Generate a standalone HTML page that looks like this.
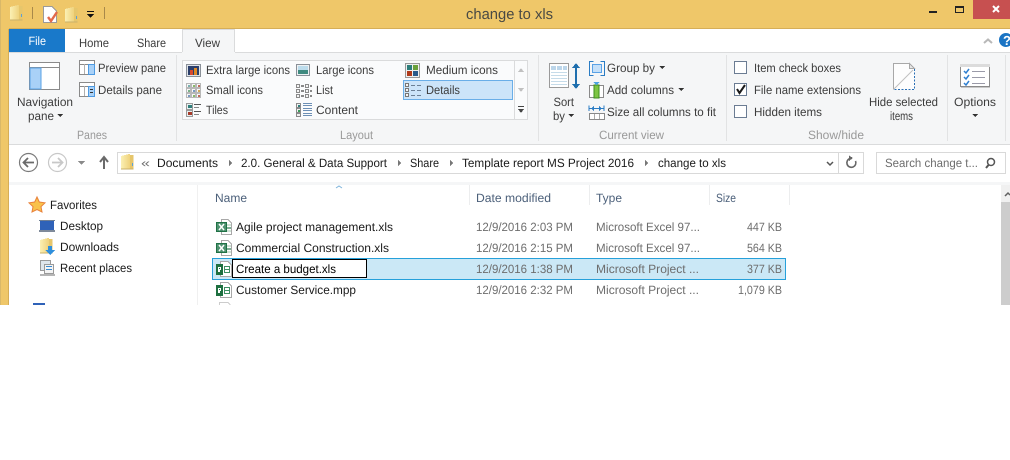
<!DOCTYPE html>
<html>
<head>
<meta charset="utf-8">
<style>
html,body{margin:0;padding:0;background:#fff;width:1010px;height:460px;overflow:hidden}
svg{display:block}
text{font-family:"Liberation Sans",sans-serif;font-size:12px;fill:#3c3c3c;text-rendering:geometricPrecision}
.g{fill:#999}
.m{fill:#6d6d6d}
.h{fill:#4c607a}
.k{fill:#1a1a1a}
</style>
</head>
<body>
<svg width="1010" height="460" viewBox="0 0 1010 460" xmlns="http://www.w3.org/2000/svg" shape-rendering="crispEdges">
<defs>
<linearGradient id="fold" x1="0" y1="0" x2="1" y2="0"><stop offset="0" stop-color="#fbf0b4"/><stop offset="1" stop-color="#efd27c"/></linearGradient>
<g id="xl">
<path d="M5.500 .5H12L15.500 4V15.500H5.500Z" fill="#fff" stroke="#a8a8a8"/>
<rect x="11" y="5" width="4" height="2" fill="#cfe3d6"/><rect x="11" y="8" width="4" height="2" fill="#7fb096"/><rect x="11" y="11" width="4" height="2" fill="#cfe3d6"/>
<rect x="0" y="3" width="11" height="10" fill="#1f7145"/>
<rect x="1" y="4" width="9" height="8" fill="#4e9270"/>
<path d="M3 5L8 11M8 5L3 11" stroke="#fff" stroke-width="1.500" fill="none" shape-rendering="auto"/>
</g>
<g id="pj">
<path d="M4.500 .5H12L15.500 4V15.500H4.500Z" fill="#fff" stroke="#a8a8a8"/>
<rect x="8" y="5" width="6" height="1" fill="#3f8f63"/><rect x="8" y="8" width="6" height="1" fill="#3f8f63"/><rect x="8" y="11" width="6" height="1" fill="#3f8f63"/>
<rect x="8" y="5" width="1" height="7" fill="#3f8f63"/><rect x="13" y="5" width="1" height="7" fill="#3f8f63"/>
<rect x="0" y="3" width="7" height="11" fill="#1e7040"/>
<rect x="2" y="6" width="3" height="5" fill="#fff"/><rect x="3" y="7" width="1" height="1" fill="#1e7040"/><rect x="4" y="9" width="1" height="2" fill="#1e7040"/>
</g>
<g id="folder">
<path d="M0 2L8 0H9V15L0 15Z" fill="url(#fold)"/>
<path d="M9 1H12.500V15H9Z" fill="#e6c66c"/>
<path d="M0 15H12.500" stroke="#c9b06a" fill="none"/>
<rect x="11" y="9" width="1" height="3" fill="#5ba0d8"/>
</g>
</defs>

<rect width="1010" height="305" fill="#fff"/>
<!-- frame -->
<rect width="1010" height="28" fill="#efc769"/>
<rect y="28" width="1010" height="1" fill="#d6ae57"/>
<rect y="28" width="9" height="277" fill="#efc769"/>
<rect x="8" y="29" width="1" height="276" fill="#d6ae57"/>
<rect x="0" y="0" width="1" height="305" fill="#d9b869"/>

<!-- quick access -->
<use href="#folder" x="10" y="5"/>
<rect x="32" y="7" width="1" height="12" fill="#a8894a"/>
<path d="M43.500 6.500H52L56.500 11V22.500H43.500Z" fill="#fff" stroke="#9a9a9a"/>
<path d="M48 17L51 21L57 12" stroke="#e2694b" stroke-width="2.400" fill="none" shape-rendering="auto"/>
<use href="#folder" x="65" y="7"/>
<rect x="87" y="11" width="7" height="1" fill="#111"/>
<path d="M87 14H94L90.500 18Z" fill="#111"/>
<rect x="104" y="7" width="1" height="12" fill="#a8894a"/>
<text x="466" y="19" textLength="87" lengthAdjust="spacingAndGlyphs" style="font-size:15px;fill:#4a4a44">change to xls</text>

<!-- window controls -->
<rect x="929" y="11" width="8" height="2" fill="#222"/>
<rect x="955.500" y="6.500" width="8" height="6" fill="none" stroke="#222"/><rect x="955" y="6" width="9" height="2" fill="#222"/>
<rect x="973" y="0" width="37" height="19" fill="#c75050"/>
<path d="M993 6L999 12M999 6L993 12" stroke="#fff" stroke-width="2" fill="none" shape-rendering="auto"/>

<!-- tabs -->
<rect x="9" y="29" width="1001" height="23" fill="#fff"/>
<rect x="9" y="29" width="56" height="23" fill="#1979ca"/>
<text x="28.500" y="45" textLength="17.500" lengthAdjust="spacingAndGlyphs" style="fill:#fff">File</text>
<text x="79" y="47" textLength="30" lengthAdjust="spacingAndGlyphs">Home</text>
<text x="137" y="47" textLength="29" lengthAdjust="spacingAndGlyphs">Share</text>
<path d="M984 43L988 39.500L992 43" stroke="#b8b8b8" stroke-width="2" fill="none" shape-rendering="auto"/>
<circle cx="1006" cy="40" r="7" fill="#1a74c4" shape-rendering="auto"/>
<text x="1003" y="45" style="font-size:13px;font-weight:bold;fill:#fff">?</text>

<!-- ribbon -->
<rect x="9" y="52" width="1001" height="92" fill="#f5f6f7"/>
<rect x="9" y="52" width="1001" height="1" fill="#dadbdc"/>
<rect x="9" y="144" width="1001" height="1" fill="#dadbdc"/>
<rect x="182" y="29" width="53" height="24" fill="#f5f6f7"/>
<path d="M182.500 52V29.500H234.500V52" fill="none" stroke="#dadbdc"/>
<text x="195" y="47" textLength="25" lengthAdjust="spacingAndGlyphs">View</text>
<rect x="176" y="55" width="1" height="86" fill="#e2e3e4"/>
<rect x="538" y="55" width="1" height="86" fill="#e2e3e4"/>
<rect x="726" y="55" width="1" height="86" fill="#e2e3e4"/>
<rect x="947" y="55" width="1" height="86" fill="#e2e3e4"/>
<rect x="1005" y="55" width="1" height="86" fill="#e2e3e4"/>

<!-- panes -->
<rect x="29.500" y="62.500" width="30" height="27" fill="#fff" stroke="#8a8a8a"/>
<rect x="29" y="67" width="31" height="1" fill="#8a8a8a"/>
<rect x="30" y="68" width="11" height="21" fill="#a9d1f7" stroke="#5aa2e6"/>
<rect x="79.500" y="60.500" width="15" height="14" fill="#fff" stroke="#8a8a8a"/>
<rect x="79" y="64" width="16" height="1" fill="#8a8a8a"/>
<rect x="84" y="64" width="1" height="10" fill="#b0b0b0"/>
<rect x="88.500" y="64.500" width="6" height="10" fill="#a9d1f7" stroke="#4d9ae2"/>
<rect x="79.500" y="82.500" width="15" height="14" fill="#fff" stroke="#8a8a8a"/>
<rect x="79" y="86" width="16" height="1" fill="#8a8a8a"/>
<rect x="84" y="86" width="1" height="10" fill="#b0b0b0"/>
<rect x="88.500" y="86.500" width="6" height="10" fill="#a9d1f7" stroke="#4d9ae2"/>
<rect x="90" y="89" width="3" height="1" fill="#333"/><rect x="90" y="92" width="3" height="1" fill="#333"/>
<text x="98" y="72" textLength="68" lengthAdjust="spacingAndGlyphs">Preview pane</text>
<text x="98" y="94" textLength="64" lengthAdjust="spacingAndGlyphs">Details pane</text>
<text x="17" y="106" textLength="56" lengthAdjust="spacingAndGlyphs">Navigation</text>
<text x="28" y="120" textLength="26" lengthAdjust="spacingAndGlyphs">pane</text>
<path d="M57 114H63L60 117Z" fill="#333"/>
<text x="77" y="139" textLength="30" lengthAdjust="spacingAndGlyphs" class="g">Panes</text>

<!-- layout gallery -->
<rect x="182.500" y="60.500" width="345" height="59" fill="#fafbfc" stroke="#dadbdc"/>
<rect x="514" y="61" width="1" height="58" fill="#dadbdc"/>
<rect x="404" y="80" width="109" height="20" fill="#cce4f9"/>
<rect x="403.500" y="80.500" width="109" height="19" fill="none" stroke="#6aaee8"/>
<path d="M518 72L521 68L524 72Z" fill="#c0c0c0"/>
<path d="M518 88L521 92L524 88Z" fill="#c0c0c0"/>
<rect x="518" y="106" width="6" height="1" fill="#444"/><path d="M518 109H524L521 113Z" fill="#444"/>

<rect x="186.500" y="64.500" width="14" height="12" fill="#dfe3e8" stroke="#8a9098"/>
<rect x="188" y="66" width="11" height="9" fill="#2b3f6b"/><rect x="190" y="70" width="3" height="5" fill="#d94a2e"/><rect x="194" y="68" width="3" height="7" fill="#e08a26"/>
<g fill="#f8f8f8" stroke="#b8b8b8">
<rect x="186.500" y="83.500" width="4" height="4"/><rect x="191.500" y="83.500" width="4" height="4"/><rect x="196.500" y="83.500" width="4" height="4"/>
<rect x="186.500" y="88.500" width="4" height="4"/><rect x="191.500" y="88.500" width="4" height="4"/><rect x="196.500" y="88.500" width="4" height="4"/>
<rect x="186.500" y="93.500" width="4" height="4"/><rect x="191.500" y="93.500" width="4" height="4"/><rect x="196.500" y="93.500" width="4" height="4"/>
</g>
<rect x="188" y="85" width="2" height="2" fill="#7ab0b0"/><rect x="193" y="85" width="2" height="2" fill="#8aba6a"/><rect x="198" y="85" width="2" height="2" fill="#c06a5a"/>
<rect x="188" y="90" width="2" height="2" fill="#7ab08a"/><rect x="193" y="90" width="2" height="2" fill="#7a9ac0"/><rect x="198" y="90" width="2" height="2" fill="#d0a85a"/>
<rect x="188" y="95" width="2" height="2" fill="#7a9ac0"/><rect x="193" y="95" width="2" height="2" fill="#8aba6a"/><rect x="198" y="95" width="2" height="2" fill="#c06a5a"/>
<rect x="186.500" y="103.500" width="6" height="6" fill="#e8f0f0" stroke="#9a9a9a"/><rect x="188" y="105" width="4" height="3" fill="#2d7d7a"/>
<rect x="186.500" y="110.500" width="6" height="6" fill="#e8f0f0" stroke="#9a9a9a"/><rect x="188" y="112" width="4" height="3" fill="#a83a2a"/>
<rect x="194" y="104" width="7" height="1" fill="#555"/><rect x="194" y="107" width="5" height="1" fill="#888"/><rect x="194" y="111" width="7" height="1" fill="#555"/><rect x="194" y="114" width="5" height="1" fill="#888"/>
<text x="206" y="74" textLength="84" lengthAdjust="spacingAndGlyphs">Extra large icons</text>
<text x="206" y="94" textLength="57" lengthAdjust="spacingAndGlyphs">Small icons</text>
<text x="206" y="114" textLength="22" lengthAdjust="spacingAndGlyphs">Tiles</text>

<rect x="296.500" y="64.500" width="13" height="11" fill="#eef1f3" stroke="#8a9098"/>
<rect x="298" y="66" width="10" height="4" fill="#bcdcec"/><rect x="298" y="70" width="10" height="4" fill="#3f8a80"/>
<g fill="#f4f4f4" stroke="#8a8a8a">
<rect x="296.500" y="84.500" width="3" height="3"/><rect x="296.500" y="89.500" width="3" height="3"/><rect x="296.500" y="94.500" width="3" height="3"/>
<rect x="305.500" y="84.500" width="3" height="3"/><rect x="305.500" y="89.500" width="3" height="3"/><rect x="305.500" y="94.500" width="3" height="3"/>
</g>
<g fill="#888"><rect x="301" y="85" width="3" height="2"/><rect x="301" y="90" width="3" height="2"/><rect x="301" y="95" width="3" height="2"/><rect x="310" y="85" width="2" height="2"/><rect x="310" y="90" width="2" height="2"/><rect x="310" y="95" width="2" height="2"/></g>
<g fill="#f2f2f2" stroke="#8a8a8a">
<rect x="296.500" y="103.500" width="4" height="4"/><rect x="296.500" y="108.500" width="4" height="4"/><rect x="296.500" y="113.500" width="4" height="3"/>
</g>
<rect x="298" y="105" width="2" height="2" fill="#2d7d7a"/><rect x="298" y="110" width="2" height="2" fill="#3a9a5a"/>
<g fill="#6d8fb5"><rect x="303" y="103" width="9" height="1"/><rect x="303" y="105" width="9" height="1"/><rect x="303" y="108" width="9" height="1"/><rect x="303" y="110" width="9" height="1"/><rect x="303" y="113" width="9" height="1"/><rect x="303" y="115" width="9" height="1"/></g>
<text x="316" y="74" textLength="58" lengthAdjust="spacingAndGlyphs">Large icons</text>
<text x="316" y="94" textLength="17" lengthAdjust="spacingAndGlyphs">List</text>
<text x="316" y="114" textLength="42" lengthAdjust="spacingAndGlyphs">Content</text>

<rect x="405.500" y="63.500" width="14" height="14" fill="#f0f0f0" stroke="#9a9a9a"/>
<rect x="407" y="65" width="5" height="5" fill="#2d7d7a"/><rect x="413" y="65" width="5" height="5" fill="#6aa03a"/><rect x="407" y="71" width="5" height="5" fill="#b03a1a"/><rect x="413" y="71" width="5" height="5" fill="#2a5a8a"/>
<g fill="#f4f4f4" stroke="#777"><rect x="405.500" y="83.500" width="3" height="3"/><rect x="405.500" y="88.500" width="3" height="3"/><rect x="405.500" y="93.500" width="3" height="3"/></g>
<g fill="#6b7f95"><rect x="411" y="85" width="4" height="1"/><rect x="417" y="85" width="4" height="1"/><rect x="411" y="90" width="4" height="1"/><rect x="417" y="90" width="4" height="1"/><rect x="411" y="95" width="4" height="1"/><rect x="417" y="95" width="4" height="1"/></g>
<text x="426" y="74" textLength="72" lengthAdjust="spacingAndGlyphs">Medium icons</text>
<text x="426" y="94" textLength="34" lengthAdjust="spacingAndGlyphs">Details</text>
<text x="340" y="139" textLength="33" lengthAdjust="spacingAndGlyphs" class="g">Layout</text>

<!-- current view -->
<rect x="549.500" y="63.500" width="19" height="24" fill="#fff" stroke="#9a9a9a"/>
<g fill="#bcd6ea"><rect x="551" y="66" width="5" height="4"/><rect x="557" y="66" width="5" height="4"/><rect x="563" y="66" width="4" height="4"/></g>
<g fill="#c5dbe9"><rect x="551" y="72" width="16" height="1"/><rect x="551" y="75" width="16" height="1"/><rect x="551" y="78" width="16" height="1"/><rect x="551" y="81" width="16" height="1"/><rect x="551" y="84" width="16" height="1"/></g>
<rect x="575" y="66" width="2" height="20" fill="#1f6fae"/>
<path d="M572 68L576 63L580 68Z" fill="#1f6fae"/><path d="M572 84L576 89L580 84Z" fill="#1f6fae"/>
<text x="553.500" y="106" textLength="20.500" lengthAdjust="spacingAndGlyphs">Sort</text>
<text x="553" y="120" textLength="12" lengthAdjust="spacingAndGlyphs">by</text>
<path d="M568 114H574L571 117Z" fill="#333"/>

<path d="M593.500 61.500H589.500V75.500H593.500M600.500 61.500H604.500V75.500H600.500" fill="none" stroke="#2a7cc4"/>
<rect x="592.500" y="64.500" width="9" height="8" fill="#c5e0f9" stroke="#5aa2e6"/>
<rect x="589.500" y="85.500" width="14" height="12" fill="#fff" stroke="#8a8a8a"/>
<rect x="594" y="85" width="5" height="13" fill="#7ec544" stroke="#3d8e1e"/>
<path d="M593 82H600L596.500 85Z" fill="#4da3e0"/>
<rect x="589" y="108" width="15" height="1" fill="#2a7cc4"/>
<path d="M589 105.500V111M604 105.500V111" stroke="#2a7cc4" fill="none"/>
<path d="M591 108.500L594 106V111ZM602 108.500L599 106V111Z" fill="#2a7cc4"/>
<rect x="589.500" y="113.500" width="15" height="6" fill="#fff" stroke="#8a8a8a"/><rect x="594" y="114" width="1" height="5" fill="#aaa"/><rect x="599" y="114" width="1" height="5" fill="#aaa"/>
<text x="607" y="72" textLength="48" lengthAdjust="spacingAndGlyphs">Group by</text>
<path d="M659 66H665L662 69Z" fill="#333"/>
<text x="607" y="94" textLength="67" lengthAdjust="spacingAndGlyphs">Add columns</text>
<path d="M678 88H684L681 91Z" fill="#333"/>
<text x="607" y="116" textLength="109" lengthAdjust="spacingAndGlyphs">Size all columns to fit</text>
<text x="599" y="139" textLength="65" lengthAdjust="spacingAndGlyphs" class="g">Current view</text>

<!-- show/hide -->
<rect x="734.500" y="61.500" width="12" height="12" fill="#fff" stroke="#6b7c93"/>
<rect x="734.500" y="83.500" width="12" height="12" fill="#fff" stroke="#6b7c93"/>
<path d="M737 89L739.500 93L745 85" stroke="#1a1a1a" stroke-width="2" fill="none" shape-rendering="auto"/>
<rect x="734.500" y="105.500" width="12" height="12" fill="#fff" stroke="#6b7c93"/>
<text x="754" y="72" textLength="87" lengthAdjust="spacingAndGlyphs">Item check boxes</text>
<text x="754" y="94" textLength="107" lengthAdjust="spacingAndGlyphs">File name extensions</text>
<text x="754" y="116" textLength="68" lengthAdjust="spacingAndGlyphs">Hidden items</text>
<path d="M893.500 89.500V63.500H909L914.500 69V89.500Z" fill="#fdfdfd"/>
<path d="M914.500 69V89.500H893.500" stroke="#2a6fb5" stroke-dasharray="2 1.500" fill="none"/>
<path d="M893.500 89.500V63.500H909" fill="none" stroke="#a8a8a8"/>
<path d="M909.500 63.500V68.500H914.500Z" fill="#e8e8e8" stroke="#a8a8a8"/>
<path d="M894 89L913 70" stroke="#c0c0c0" fill="none" shape-rendering="auto"/>
<text x="869" y="106" textLength="69" lengthAdjust="spacingAndGlyphs">Hide selected</text>
<text x="890" y="120" textLength="23" lengthAdjust="spacingAndGlyphs">items</text>
<text x="808" y="139" textLength="56" lengthAdjust="spacingAndGlyphs" class="g">Show/hide</text>

<!-- options -->
<rect x="960.500" y="64.500" width="29" height="22" fill="#fff" stroke="#8a8a8a"/>
<rect x="960" y="64" width="30" height="3" fill="#dcdcdc"/>
<rect x="961" y="87" width="29" height="1" fill="#c8c8c8"/>
<path d="M964 71L966 73L969 69M964 77L966 79L969 75M964 83L966 85L969 81" stroke="#2f7fd0" stroke-width="1.500" fill="none" shape-rendering="auto"/>
<g fill="#9a9aa8"><rect x="972" y="71" width="13" height="1"/><rect x="972" y="77" width="13" height="1"/><rect x="972" y="83" width="13" height="1"/></g>
<text x="954" y="106" textLength="42" lengthAdjust="spacingAndGlyphs">Options</text>
<path d="M972 114H978L975 117Z" fill="#333"/>

<!-- nav bar -->
<circle cx="28.500" cy="162.500" r="9" fill="#fff" stroke="#7a7a7a" stroke-width="1.200" shape-rendering="auto"/>
<path d="M34 162.500H24M28 158L23.500 162.500L28 167" stroke="#6a6a6a" stroke-width="1.800" fill="none" shape-rendering="auto"/>
<circle cx="57.500" cy="162.500" r="9" fill="#fff" stroke="#c8c8c8" stroke-width="1.200" shape-rendering="auto"/>
<path d="M52 162.500H62M58 158L62.500 162.500L58 167" stroke="#c8c8c8" stroke-width="1.800" fill="none" shape-rendering="auto"/>
<path d="M78 161H85L81.500 165Z" fill="#8a8a8a"/>
<path d="M104 169V158M100 162L104 157L108 162" stroke="#6a6a6a" stroke-width="2" fill="none" shape-rendering="auto"/>
<rect x="117.500" y="152.500" width="746" height="21" fill="#fff" stroke="#d9d9d9"/>
<rect x="838" y="153" width="1" height="20" fill="#d9d9d9"/>
<use href="#folder" x="121" y="154"/>
<text x="141" y="167" textLength="9" lengthAdjust="spacingAndGlyphs" class="m">«</text>
<text x="157" y="167" textLength="61" lengthAdjust="spacingAndGlyphs" class="k">Documents</text>
<path d="M229 160L232 163L229 166Z" fill="#777"/>
<text x="241" y="167" textLength="146" lengthAdjust="spacingAndGlyphs" class="k">2.0. General &amp; Data Support</text>
<path d="M398 160L401 163L398 166Z" fill="#777"/>
<text x="410" y="167" textLength="29" lengthAdjust="spacingAndGlyphs" class="k">Share</text>
<path d="M450 160L453 163L450 166Z" fill="#777"/>
<text x="462" y="167" textLength="172" lengthAdjust="spacingAndGlyphs" class="k">Template report MS Project 2016</text>
<path d="M645 160L648 163L645 166Z" fill="#777"/>
<text x="658" y="167" textLength="68" lengthAdjust="spacingAndGlyphs" class="k">change to xls</text>
<path d="M827 162L830 165L833 162" stroke="#555" stroke-width="1.500" fill="none" shape-rendering="auto"/>
<path d="M855.500 161A4.500 4.500 0 1 1 850 158.500" stroke="#666" stroke-width="1.600" fill="none" shape-rendering="auto"/>
<path d="M849 155.500V161L853 158Z" fill="#666"/>
<rect x="876.500" y="152.500" width="129" height="21" fill="#fff" stroke="#d9d9d9"/>
<text x="885" y="167" textLength="93" lengthAdjust="spacingAndGlyphs" class="m">Search change t...</text>
<circle cx="991" cy="162" r="3.500" fill="none" stroke="#555" stroke-width="1.500" shape-rendering="auto"/>
<path d="M988.500 165L986 168" stroke="#555" stroke-width="2" fill="none" shape-rendering="auto"/>

<!-- content -->
<rect x="9" y="182" width="1001" height="3" fill="#f5f6f7"/>
<rect x="197" y="185" width="1" height="120" fill="#f0f0f0"/>

<!-- nav pane -->
<path d="M37 197L39.300 202L45 202.800L41 206.700L42 212L37 209.500L32 212L33 206.700L29 202.800L34.700 202Z" fill="#f9c24a" stroke="#e8813a" stroke-width="1" shape-rendering="auto"/>
<text x="50" y="209" textLength="47" lengthAdjust="spacingAndGlyphs" class="k">Favorites</text>
<rect x="40" y="221" width="14" height="9" fill="#2f62b8"/>
<rect x="39" y="220" width="16" height="1" fill="#6f7f95"/><rect x="39" y="230" width="16" height="2" fill="#7f8a9a"/>
<text x="60" y="230" textLength="43" lengthAdjust="spacingAndGlyphs" class="k">Desktop</text>
<use href="#folder" x="40" y="238"/>
<path d="M48 246H52V250H55L50 255L45 250H48Z" fill="#2f8fdc"/>
<text x="60" y="251" textLength="59" lengthAdjust="spacingAndGlyphs" class="k">Downloads</text>
<rect x="40.500" y="260.500" width="10" height="10" fill="#dfe6ec" stroke="#9a9a9a"/>
<rect x="44.500" y="264.500" width="9" height="9" fill="#f4f4f4" stroke="#9a9a9a"/>
<rect x="46" y="266" width="6" height="1" fill="#3a8ad0"/><rect x="46" y="269" width="6" height="1" fill="#3a8ad0"/>
<rect x="40" y="274" width="15" height="2" fill="#b5b5b5"/>
<text x="60" y="272" textLength="72" lengthAdjust="spacingAndGlyphs" class="k">Recent places</text>
<rect x="33" y="303" width="12" height="2" fill="#2f62b8"/>

<!-- headers -->
<path d="M336 188L339 186L342 188" stroke="#7fb4dc" fill="none" shape-rendering="auto"/>
<rect x="469" y="185" width="1" height="20" fill="#ecedee"/>
<rect x="589" y="185" width="1" height="20" fill="#ecedee"/>
<rect x="709" y="185" width="1" height="20" fill="#ecedee"/>
<rect x="789" y="185" width="1" height="20" fill="#ecedee"/>
<text x="215" y="202" textLength="32" lengthAdjust="spacingAndGlyphs" class="h">Name</text>
<text x="476" y="202" textLength="75" lengthAdjust="spacingAndGlyphs" class="h">Date modified</text>
<text x="596" y="202" textLength="26" lengthAdjust="spacingAndGlyphs" class="h">Type</text>
<text x="716" y="202" textLength="20" lengthAdjust="spacingAndGlyphs" class="h">Size</text>

<!-- selected row -->
<rect x="212.500" y="258.500" width="573" height="21" fill="#cbe8f6" stroke="#26a0da"/>

<!-- rows -->
<use href="#xl" x="216" y="219"/>
<use href="#xl" x="216" y="240"/>
<use href="#pj" x="216" y="261"/>
<use href="#pj" x="216" y="282"/>
<path d="M219.500 305V302.500H228L230.500 305" fill="#fff" stroke="#ccc"/>
<rect x="232.500" y="259.500" width="134" height="18" fill="#fff" stroke="#000"/>
<text x="236" y="231" textLength="157" lengthAdjust="spacingAndGlyphs" class="k">Agile project management.xls</text>
<text x="236" y="252" textLength="153" lengthAdjust="spacingAndGlyphs" class="k">Commercial Construction.xls</text>
<text x="236" y="273" textLength="100" lengthAdjust="spacingAndGlyphs" style="fill:#000">Create a budget.xls</text>
<text x="236" y="294" textLength="120" lengthAdjust="spacingAndGlyphs" class="k">Customer Service.mpp</text>

<text x="476" y="231" textLength="97" lengthAdjust="spacingAndGlyphs" class="m">12/9/2016 2:03 PM</text>
<text x="476" y="252" textLength="97" lengthAdjust="spacingAndGlyphs" class="m">12/9/2016 2:15 PM</text>
<text x="476" y="273" textLength="97" lengthAdjust="spacingAndGlyphs" class="m">12/9/2016 1:38 PM</text>
<text x="476" y="294" textLength="97" lengthAdjust="spacingAndGlyphs" class="m">12/9/2016 2:32 PM</text>

<text x="596" y="231" textLength="104" lengthAdjust="spacingAndGlyphs" class="m">Microsoft Excel 97...</text>
<text x="596" y="252" textLength="104" lengthAdjust="spacingAndGlyphs" class="m">Microsoft Excel 97...</text>
<text x="596" y="273" textLength="103" lengthAdjust="spacingAndGlyphs" class="m">Microsoft Project ...</text>
<text x="596" y="294" textLength="103" lengthAdjust="spacingAndGlyphs" class="m">Microsoft Project ...</text>

<text x="747" y="231" textLength="35" lengthAdjust="spacingAndGlyphs" class="m">447 KB</text>
<text x="747" y="252" textLength="35" lengthAdjust="spacingAndGlyphs" class="m">564 KB</text>
<text x="747" y="273" textLength="35" lengthAdjust="spacingAndGlyphs" class="m">377 KB</text>
<text x="738" y="294" textLength="44" lengthAdjust="spacingAndGlyphs" class="m">1,079 KB</text>

<!-- scrollbar -->
<rect x="1001" y="185" width="9" height="120" fill="#f0f0f0"/>
<rect x="1001" y="202" width="9" height="103" fill="#cdcdcd"/>
<path d="M1005 196L1008 193L1010 195" stroke="#606060" stroke-width="1.500" fill="none" shape-rendering="auto"/>

<!-- below window -->
<rect y="305" width="1010" height="155" fill="#fff"/>
</svg>
</body>
</html>
